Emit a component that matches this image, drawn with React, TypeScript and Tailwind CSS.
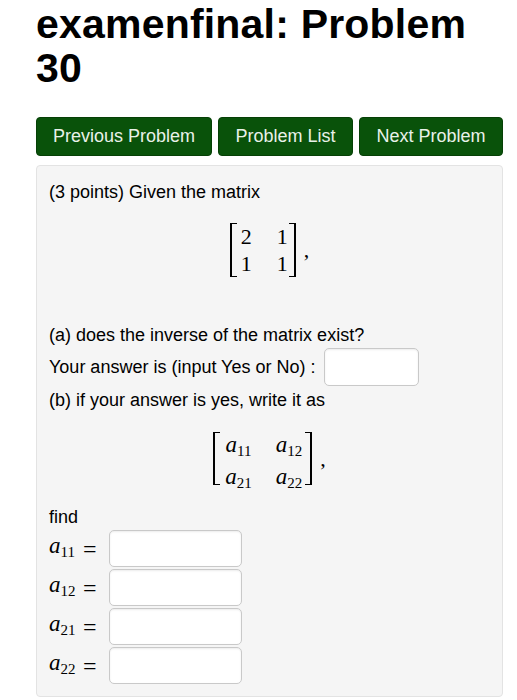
const sans = { fontFamily: '"Liberation Sans", Arial, Helvetica, sans-serif' };
const serif = { fontFamily: '"Liberation Serif", "Times New Roman", serif' };

function Entry({ sub }: { sub: string }) {
  return (
    <span className="whitespace-nowrap">
      <i>a</i>
      <span className="text-[15px] align-[-4px]">{sub}</span>
    </span>
  );
}

function Bracket({ side }: { side: 'l' | 'r' }) {
  return (
    <div
      className={
        side === 'l'
          ? 'w-[7px] border-l-[2px] border-y-[1.5px] border-black'
          : 'w-[7px] border-r-[2px] border-y-[1.5px] border-black'
      }
    />
  );
}

function Matrix({ cells, colGap, pad, rowH, size }: { cells: React.ReactNode[]; colGap: string; pad: string; rowH: string; size: string }) {
  return (
    <div className="flex justify-center items-stretch" style={serif}>
      <Bracket side="l" />
      <div className={`grid grid-cols-2 ${colGap} ${pad} ${rowH} ${size}`}>
        {cells.map((c, i) => (
          <div key={i} className="text-center">
            {c}
          </div>
        ))}
      </div>
      <Bracket side="r" />
      <span className="self-center ml-[8px] text-[22px] leading-none">,</span>
    </div>
  );
}

function AnswerRow({ sub }: { sub: string }) {
  return (
    <div className="flex items-center h-[37px]">
      <div className="w-[34px] text-[23px]" style={serif}>
        <Entry sub={sub} />
      </div>
      <span className="text-[24px] w-[26px]" style={serif}>=</span>
      <input className="w-[133px] h-[37px] bg-white border border-[#c9c9c9] rounded-[5px] shadow-[inset_0_1px_2px_rgba(0,0,0,0.08)]" />
    </div>
  );
}

export default function App() {
  return (
    <div className="bg-white min-h-[700px] pl-[36px] pr-[14px] pt-[2px] text-black" style={sans}>
      <h1 className="text-[41px] leading-[44px] font-bold tracking-[0.2px]">examenfinal: Problem 30</h1>

      <div className="flex gap-[6px] mt-[27px]">
        {['Previous Problem', 'Problem List', 'Next Problem'].map((t, i) => (
          <button
            key={t}
            className={`${i === 0 ? 'w-[176px]' : i === 1 ? 'w-[135px]' : 'w-[144px]'} h-[39px] bg-[#09520a] border border-[#064006] rounded-[4px] text-[18px] text-[#e9f1e9]`}
          >
            {t}
          </button>
        ))}
      </div>

      <div className="mt-[9px] w-[467px] bg-[#f5f5f5] border border-[#e3e3e3] rounded-[4px] px-[12px] pt-[14px] pb-[12px] text-[18px] leading-[24px]">
        <p>(3 points) Given the matrix</p>

        <div className="mt-[19px] h-[54px] flex justify-center">
          <Matrix
            cells={['2', '1', '1', '1']}
            colGap="gap-x-[25px]"
            pad="pl-[4px] pr-[1px]"
            rowH="leading-[27px]"
            size="text-[22px]"
          />
        </div>

        <p className="mt-[46px]">(a) does the inverse of the matrix exist?</p>
        <div className="flex items-center h-[38px] mt-[1px]">
          <span>Your answer is (input Yes or No) :</span>
          <input className="ml-[9px] w-[95px] h-[38px] bg-white border border-[#c9c9c9] rounded-[5px] shadow-[inset_0_1px_2px_rgba(0,0,0,0.08)]" />
        </div>
        <p className="mt-[2px]">(b) if your answer is yes, write it as</p>

        <div className="mt-[20px] h-[53px] flex justify-center">
          <Matrix
            cells={[<Entry sub="11" />, <Entry sub="12" />, <Entry sub="21" />, <Entry sub="22" />]}
            colGap="gap-x-[24px]"
            pad="pl-[5px] pr-[3px]"
            rowH="leading-[26px]"
            size="text-[23px]"
          />
        </div>

        <p className="mt-[20px]">find</p>
        <div className="flex flex-col gap-[2px] mt-[1px]">
          <AnswerRow sub="11" />
          <AnswerRow sub="12" />
          <AnswerRow sub="21" />
          <AnswerRow sub="22" />
        </div>
      </div>
    </div>
  );
}
